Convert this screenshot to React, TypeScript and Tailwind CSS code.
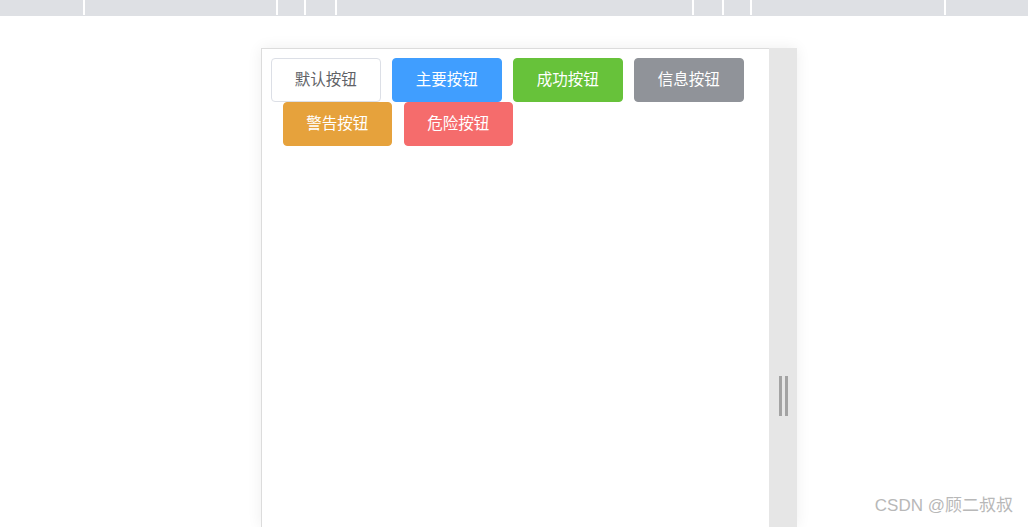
const dividers = [85, 193, 28, 31, 357, 30, 28, 194];

const buttons = [
  { label: "默认按钮", cls: "bg-white border-[#dcdfe6] text-[#606266]" },
  { label: "主要按钮", cls: "bg-[#409eff] border-[#409eff] text-white" },
  { label: "成功按钮", cls: "bg-[#67c23a] border-[#67c23a] text-white" },
  { label: "信息按钮", cls: "bg-[#909399] border-[#909399] text-white" },
  { label: "警告按钮", cls: "bg-[#e6a23c] border-[#e6a23c] text-white" },
  { label: "危险按钮", cls: "bg-[#f56c6c] border-[#f56c6c] text-white" },
];

const TopBar = () => (
  <div className="flex h-4 w-full bg-[#dee0e4]">
    {dividers.map((w, i) => (
      <div key={i} className="flex h-[15px] shrink-0" style={{ width: w }}>
        <div className="grow" />
        <div className="w-[2px] bg-white" />
      </div>
    ))}
  </div>
);

const App = () => {
  return (
    <div className="relative h-[527px] w-[1028px] overflow-hidden bg-white font-['Noto_Sans_CJK_SC',sans-serif]">
      <TopBar />
      <div className="ml-[261px] mt-[32px] flex h-[479px] w-[536px] shadow-[0_0_14px_rgba(0,0,0,0.07)]">
        <div className="h-full w-[508px] border-l border-t border-[#dcdcdc] bg-white px-[9px] pt-[9px]">
          <div className="flex flex-wrap">
            {buttons.map((b, i) => (
              <button
                key={b.label}
                className={`h-[44px] w-[109.5px] rounded-[4px] border pb-[2px] text-[15.5px] leading-none ${b.cls} ${i === 0 ? "" : "ml-[11.5px]"}`}
              >
                {b.label}
              </button>
            ))}
          </div>
        </div>
        <div className="flex h-full w-[28px] items-start justify-center gap-[3px] bg-[#e6e6e6] pt-[328px]">
          <div className="h-[40px] w-[3px] bg-[#a3a3a3]" />
          <div className="h-[40px] w-[3px] bg-[#a3a3a3]" />
        </div>
      </div>
      <div className="absolute bottom-[9px] right-[15px] font-['Liberation_Sans','Noto_Sans_CJK_SC',sans-serif] text-[17px] text-[#b8b8b8]">
        CSDN @顾二叔叔
      </div>
    </div>
  );
};

export default App;
